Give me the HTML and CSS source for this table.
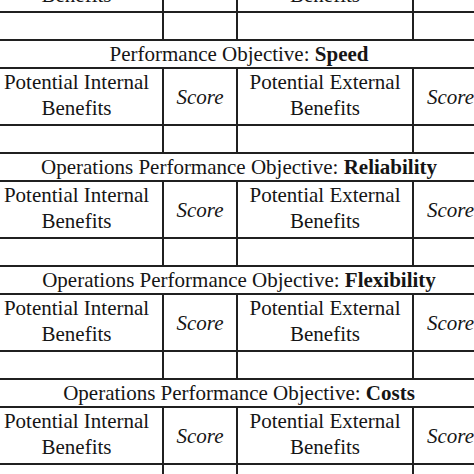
FILE: index.html
```html
<!DOCTYPE html>
<html>
<head>
<meta charset="utf-8">
<link rel="stylesheet" href="styles.css">
</head>
<body>
<div class="frame">
<table class="grid">
  <colgroup>
    <col class="c-ben"><col class="c-score"><col class="c-ben2"><col class="c-score2">
  </colgroup>
  <tbody>
    <tr class="head"><td>Potential Internal<br>Benefits</td><td class="score">Score</td><td>Potential External<br>Benefits</td><td class="score">Score</td></tr>
    <tr class="blank"><td></td><td></td><td></td><td></td></tr>
    <tr class="title"><td colspan="4">Performance Objective: <b>Speed</b></td></tr>
    <tr class="head"><td>Potential Internal<br>Benefits</td><td class="score">Score</td><td>Potential External<br>Benefits</td><td class="score">Score</td></tr>
    <tr class="blank"><td></td><td></td><td></td><td></td></tr>
    <tr class="title"><td colspan="4">Operations Performance Objective: <b>Reliability</b></td></tr>
    <tr class="head"><td>Potential Internal<br>Benefits</td><td class="score">Score</td><td>Potential External<br>Benefits</td><td class="score">Score</td></tr>
    <tr class="blank"><td></td><td></td><td></td><td></td></tr>
    <tr class="title"><td colspan="4">Operations Performance Objective: <b>Flexibility</b></td></tr>
    <tr class="head"><td>Potential Internal<br>Benefits</td><td class="score">Score</td><td>Potential External<br>Benefits</td><td class="score">Score</td></tr>
    <tr class="blank"><td></td><td></td><td></td><td></td></tr>
    <tr class="title"><td colspan="4">Operations Performance Objective: <b>Costs</b></td></tr>
    <tr class="head"><td>Potential Internal<br>Benefits</td><td class="score">Score</td><td>Potential External<br>Benefits</td><td class="score">Score</td></tr>
    <tr class="blank"><td></td><td></td><td></td><td></td></tr>
  </tbody>
</table>
</div>
</body>
</html>
```
FILE: styles.css
```css
html, body {
  margin: 0;
  padding: 0;
  background: #fff;
}
.frame {
  width: 474px;
  height: 474px;
  overflow: hidden;
}
.grid {
  margin-left: -11px;
  margin-top: -46px;
  border-collapse: collapse;
  table-layout: fixed;
  width: 498px;
  font-family: "Liberation Serif", "Times New Roman", serif;
  font-size: 21px;
  color: #151515;
}
.c-ben { width: 173px; }
.c-score { width: 74px; }
.c-ben2 { width: 176px; }
.c-score2 { width: 75px; }
.grid td {
  border: 2px solid #202020;
  padding: 0;
  text-align: center;
  vertical-align: middle;
  line-height: 26px;
  overflow: hidden;
  white-space: nowrap;
}
.grid .score { font-style: italic; }
.head td { height: 52px; padding-bottom: 3px; }
.head td.score { height: 55px; padding-bottom: 0; }
.blank td { height: 26px; }
.title td { height: 26px; }
```
